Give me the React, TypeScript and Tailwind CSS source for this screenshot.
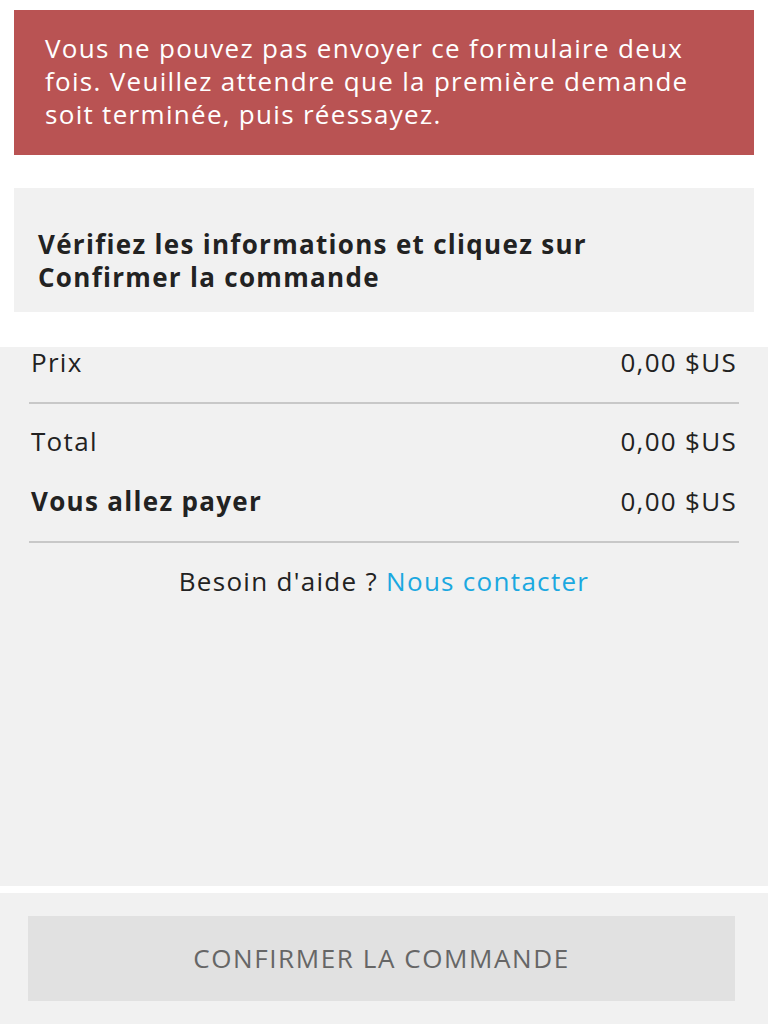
import React from "react";

export default function App() {
  const font = { fontFamily: '"Open Sans", "Noto Sans", sans-serif' };
  return (
    <div className="w-[768px] h-[1024px] bg-white flex flex-col overflow-hidden text-[26px] tracking-[1.3px]" style={font}>
      <div className="pt-[10px] px-[14px]">
        <div className="bg-[#b95353] text-white leading-[33px] pl-[31px] pr-[22px] pt-[22px] h-[145px]">
          Vous ne pouvez pas envoyer ce formulaire deux fois. Veuillez attendre que la première demande soit terminée, puis réessayez.
        </div>
      </div>
      <div className="pt-[33px] px-[14px]">
        <div className="bg-[#f1f1f1] h-[124px] pl-[24px] pr-[30px] pt-[40px] leading-[33px] font-bold text-[#222]">
          Vérifiez les informations et cliquez sur Confirmer la commande
        </div>
      </div>
      <div className="mt-[35px] bg-[#f1f1f1] h-[539px] px-[29px] text-[#222]">
        <div className="flex justify-between items-center h-[30px] px-[2px]">
          <span>Prix</span>
          <span>0,00 $US</span>
        </div>
        <div className="mt-[25px] border-t-2 border-[#c8c8c8]" />
        <div className="flex justify-between items-center h-[30px] px-[2px] mt-[22px]">
          <span>Total</span>
          <span>0,00 $US</span>
        </div>
        <div className="flex justify-between items-center h-[30px] px-[2px] mt-[30px]">
          <span className="font-bold">Vous allez payer</span>
          <span>0,00 $US</span>
        </div>
        <div className="mt-[25px] border-t-2 border-[#c8c8c8]" />
        <div className="text-center mt-[23px] leading-[30px]">
          Besoin d'aide ? <span className="text-[#1ba8e0]">Nous contacter</span>
        </div>
      </div>
      <div className="h-[7px] bg-white" />
      <div className="flex-1 bg-[#f1f1f1] px-[28px] pt-[23px]">
        <div className="h-[85px] bg-[#e1e1e1] flex items-center justify-center text-[#666] uppercase w-[707px] tracking-[1.6px]">
          Confirmer la commande
        </div>
      </div>
    </div>
  );
}
